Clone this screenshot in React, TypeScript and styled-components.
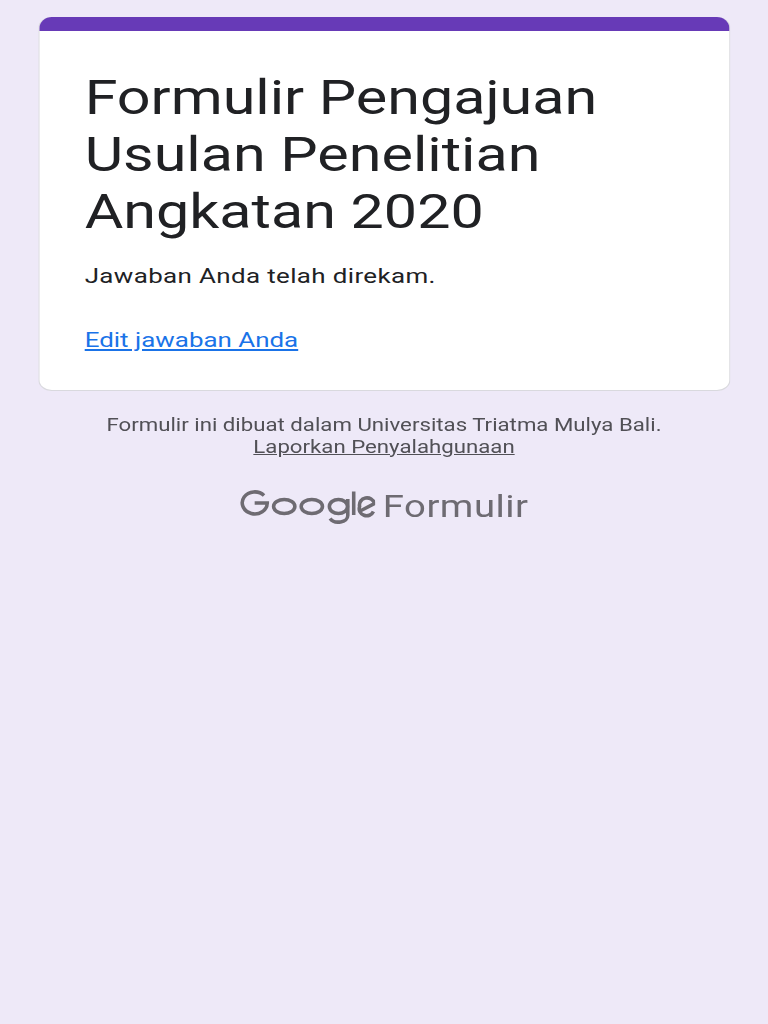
import styled, { createGlobalStyle } from 'styled-components';

const STRETCH = 1.234;

const GlobalStyle = createGlobalStyle`
  html, body {
    margin: 0;
    padding: 0;
    height: 100%;
    overflow: hidden;
    background: #eee9f8;
  }
`;

const GoogleLogo = () => (
  <LogoSvg viewBox="0 0 138 34" preserveAspectRatio="none" role="img" aria-label="Google">
    <g fill="none" stroke="currentColor" strokeWidth="3.6">
      <path d="M25 5.5A12.7 11 0 1 0 28.3 13H15.5" />
      <ellipse cx="45.5" cy="16.5" rx="10.8" ry="7" />
      <ellipse cx="73.5" cy="16.5" rx="10.8" ry="7" />
      <ellipse cx="100.5" cy="16.5" rx="9.2" ry="7" />
      <path d="M110 9V25.5A9.5 6.5 0 0 1 92 28.5" />
      <path d="M116 1.5V25" />
      <path d="M123.5 20.5L137 13.5A7.5 7 0 0 0 122 16.5A7.5 7 0 0 0 136 21.5" />
    </g>
  </LogoSvg>
);

const App = () => {
  return (
    <>
      <GlobalStyle />
      <Page>
        <Card>
          <TopBar />
          <CardBody>
            <Title>Formulir Pengajuan Usulan Penelitian Angkatan 2020</Title>
            <Message>Jawaban Anda telah direkam.</Message>
            <EditLink href="#">Edit jawaban Anda</EditLink>
          </CardBody>
        </Card>
        <Notice>
          <div>Formulir ini dibuat dalam Universitas Triatma Mulya Bali.</div>
          <ReportLink href="#">Laporkan Penyalahgunaan</ReportLink>
        </Notice>
        <Brand>
          <GoogleLogo />
          <BrandName>Formulir</BrandName>
        </Brand>
      </Page>
    </>
  );
};

export default App;

const Page = styled.main`
  box-sizing: border-box;
  width: ${768 / STRETCH}px;
  min-height: 1024px;
  padding: 17px ${38 / STRETCH}px 0;
  transform: scaleX(${STRETCH});
  transform-origin: left top;
  font-family: Roboto, 'Liberation Sans', sans-serif;
`;

const Card = styled.section`
  box-sizing: border-box;
  height: 374px;
  overflow: hidden;
  background: #fff;
  border-radius: 11px;
  border: 1.5px solid #d9d9de;
  border-top: 0;
`;

const TopBar = styled.div`
  height: 14px;
  margin: 0 -2px;
  background: #673ab7;
`;

const CardBody = styled.div`
  padding: 38px ${45.5 / STRETCH}px 0;
`;

const Title = styled.h1`
  margin: 0;
  font-size: 48px;
  font-weight: 400;
  line-height: 57px;
  color: #202124;
`;

const Message = styled.p`
  margin: 22px 0 0;
  font-size: 21px;
  line-height: 28px;
  letter-spacing: 0.3px;
  color: #202124;
`;

const EditLink = styled.a`
  display: block;
  margin-top: 36px;
  font-size: 21px;
  line-height: 28px;
  color: #1a73e8;
`;

const Notice = styled.div`
  margin-top: 22.5px;
  text-align: center;
  font-size: 18px;
  line-height: 22px;
  color: #515056;
`;

const ReportLink = styled.a`
  color: #515056;
`;

const Brand = styled.div`
  display: flex;
  justify-content: center;
  align-items: flex-start;
  gap: 6px;
  margin-top: 32px;
  color: #6e6b72;
`;

const LogoSvg = styled.svg`
  display: block;
  width: ${136 / STRETCH}px;
  height: 34px;
`;

const BrandName = styled.span`
  font-size: 31px;
  line-height: 34px;
  letter-spacing: 0.4px;
`;
